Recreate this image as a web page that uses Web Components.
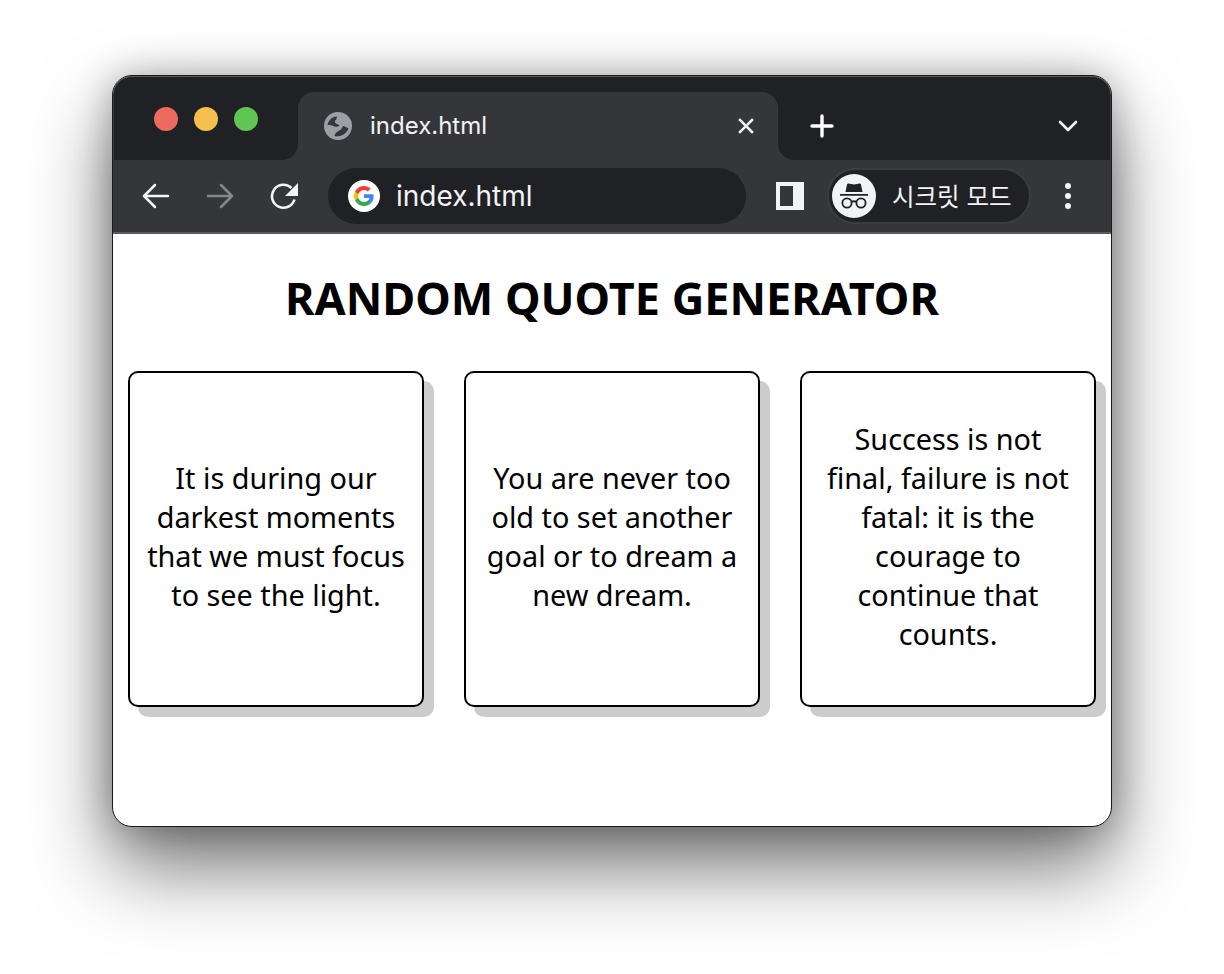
<!DOCTYPE html>
<html lang="ko">
<head>
<meta charset="utf-8">
<title>index.html</title>
<style>
  html, body { margin: 0; background: #fff; }
  body { font-family: "Noto Sans", "Noto Sans CJK KR", sans-serif; }
</style>
</head>
<body>
<browser-window>
  <tab-strip slot="strip" title-text="index.html"></tab-strip>
  <tool-bar slot="bar" address="index.html" mode-label="시크릿 모드"></tool-bar>
  <quote-page>
    <quote-card>It is during our darkest moments that we must focus to see the light.</quote-card>
    <quote-card>You are never too old to set another goal or to dream a new dream.</quote-card>
    <quote-card>Success is not final, failure is not fatal: it is the courage to continue that counts.</quote-card>
  </quote-page>
</browser-window>

<script>
class BrowserWindow extends HTMLElement {
    constructor() {
        super();
        this.attachShadow({ mode: 'open' });
        this.shadowRoot.innerHTML = `
            <style>
                :host { display: block; padding: 75px 112px 148px; overflow: hidden; }
                .win {
                    height: 752px;
                    border-radius: 20px;
                    background: #fff;
                    overflow: hidden;
                    display: flex;
                    flex-direction: column;
                    box-sizing: border-box;
                    border: 1px solid #1a1a1c;
                    box-shadow: 0 40px 80px rgba(0, 0, 0, .55), 0 0 36px rgba(0, 0, 0, .28);
                }
                .body { flex: 1; min-height: 0; }
            </style>
            <div class="win">
                <slot name="strip"></slot>
                <slot name="bar"></slot>
                <div class="body"><slot></slot></div>
            </div>
        `;
    }
}

class TabStrip extends HTMLElement {
    connectedCallback() {
        const title = this.getAttribute('title-text');
        this.attachShadow({ mode: 'open' });
        this.shadowRoot.innerHTML = `
            <style>
                :host { display: block; background: #35363a; border-radius: 19px 19px 0 0; }
                .strip {
                    height: 84px;
                    background: #202124;
                    border-radius: 19px 19px 0 0;
                    box-shadow: inset 0 1px 0 #56575b, inset 1px 0 0 #3a3b3f, inset -1px 0 0 #3a3b3f;
                    display: flex;
                    align-items: flex-end;
                    box-sizing: border-box;
                    padding-left: 41px;
                }
                .lights { display: flex; gap: 16px; width: 144px; height: 68px; padding-top: 15px; box-sizing: border-box; flex: none; }
                .lights i { width: 24px; height: 24px; border-radius: 50%; }
                .tab {
                    position: relative;
                    width: 480px;
                    height: 68px;
                    background: #35363a;
                    border-radius: 16px 16px 0 0;
                    display: flex;
                    align-items: center;
                    padding: 0 24px 0 26px;
                    box-sizing: border-box;
                    color: #f1f3f4;
                    font: 24px/1 "Inter", "Noto Sans", sans-serif;
                    flex: none;
                }
                .tab::before, .tab::after {
                    content: '';
                    position: absolute;
                    bottom: 0;
                    width: 16px;
                    height: 16px;
                    background: radial-gradient(circle at 0 0, #202124 15.5px, #35363a 16.5px);
                }
                .tab::before { left: -16px; }
                .tab::after { right: -16px; background: radial-gradient(circle at 100% 0, #202124 15.5px, #35363a 16.5px); }
                .name { flex: 1; margin-left: 18px; }
                .plus { margin-left: 32px; margin-bottom: 22px; display: block; }
                .more { margin-left: auto; margin-right: 33px; margin-bottom: 28px; display: block; }
            </style>
            <div class="strip">
                <div class="lights">
                    <i style="background:#ed6a5e"></i>
                    <i style="background:#f4bf4f"></i>
                    <i style="background:#61c554"></i>
                </div>
                <div class="tab">
                    <svg width="28" height="28" viewBox="0 0 28 28">
                        <circle cx="14" cy="14" r="14" fill="#9aa0a6"/>
                        <path d="M3.500 13C4.500 8 8 5 12.500 4.500 13.500 6 12 8 11 9 10 10.500 12 11.500 15 13 16 14.500 13 15 10.500 14.500 8 13 6 13 3.500 13z" fill="#35363a"/>
                        <path d="M10.500 24C11 21 13 19.500 16 18 18 17 18.500 15 19 14 20.500 14 23 15.500 24.500 16.500 23 20.500 19 24 14 24.300 12.500 24.500 11.500 24.300 10.500 24z" fill="#35363a"/>
                    </svg>
                    <span class="name">${title}</span>
                    <svg width="16" height="16" viewBox="0 0 16 16" fill="none" stroke="#f1f3f4" stroke-width="2.500" stroke-linecap="square"><path d="M2 2l12 12M14 2L2 14"/></svg>
                </div>
                <svg class="plus" width="24" height="24" viewBox="0 0 24 24" fill="none" stroke="#fff" stroke-width="3.400" stroke-linecap="round"><path d="M12 2v20M2 12h20"/></svg>
                <svg class="more" width="20" height="12" viewBox="0 0 20 12" fill="none" stroke="#f1f3f4" stroke-width="2.600" stroke-linecap="round" stroke-linejoin="round"><path d="M2 2l8 8 8-8"/></svg>
            </div>
        `;
    }
}

class ToolBar extends HTMLElement {
    connectedCallback() {
        const address = this.getAttribute('address');
        const label = this.getAttribute('mode-label');
        this.attachShadow({ mode: 'open' });
        this.shadowRoot.innerHTML = `
            <style>
                :host {
                    display: flex;
                    align-items: center;
                    height: 74px;
                    box-sizing: border-box;
                    background: #35363a;
                    border-bottom: 2px solid #5a5b5f;
                    padding-left: 29px;
                    flex: none;
                }
                svg { display: block; flex: none; }
                .nav { display: flex; align-items: center; gap: 36px; width: 186px; flex: none; }
                .omni {
                    width: 418px;
                    height: 56px;
                    border-radius: 28px;
                    background: #202124;
                    display: flex;
                    align-items: center;
                    padding-left: 20px;
                    box-sizing: border-box;
                    color: #f1f3f4;
                    font: 28px/1 "Inter", "Noto Sans", sans-serif;
                    flex: none;
                }
                .omni span { margin-left: 16px; }
                .panel { margin-left: 30px; }
                .mode {
                    margin-left: 23px;
                    width: 204px;
                    height: 56px;
                    border-radius: 28px;
                    background: #202124;
                    border: 2px solid #3c3d41;
                    box-sizing: border-box;
                    display: flex;
                    align-items: center;
                    padding-left: 3px;
                    color: #f1f3f4;
                    font: 24.5px/1 "Noto Sans CJK KR", sans-serif;
                    flex: none;
                }
                .mode span { margin-left: 16px; white-space: nowrap; }
                .dots { margin-left: 33px; }
            </style>
            <div class="nav">
                <svg width="28" height="26" viewBox="0 0 28 26" fill="none" stroke="#f1f3f4" stroke-width="2.500" stroke-linecap="round" stroke-linejoin="round"><path d="M26 13H2M13 2L2 13l11 11"/></svg>
                <svg width="28" height="26" viewBox="0 0 28 26" fill="none" stroke="#85878b" stroke-width="2.500" stroke-linecap="round" stroke-linejoin="round"><path d="M2 13h24M15 2l11 11-11 11"/></svg>
                <svg width="30" height="28" viewBox="0 0 30 28"><path d="M24.500 17.500A11.500 11.500 0 1 1 21.500 6" fill="none" stroke="#f1f3f4" stroke-width="2.600"/><path d="M28 1v13H15z" fill="#f1f3f4"/></svg>
            </div>
            <div class="omni">
                <svg width="32" height="32" viewBox="0 0 32 32">
                    <circle cx="16" cy="16" r="16" fill="#fff"/>
                    <path d="M25.600 16.200c0-.7-.1-1.400-.2-2H16v3.800h5.400c-.2 1.200-.9 2.300-2 3v2.500h3.200c1.900-1.700 3-4.300 3-7.300z" fill="#4285f4"/>
                    <path d="M16 26c2.700 0 5-.9 6.600-2.500l-3.200-2.500c-.9.600-2 1-3.400 1-2.600 0-4.800-1.800-5.600-4.100H7.100v2.600C8.800 23.800 12.100 26 16 26z" fill="#34a853"/>
                    <path d="M10.400 17.900c-.4-1.200-.4-2.600 0-3.800v-2.600H7.100c-1.400 2.700-1.400 6.300 0 9z" fill="#fbbc05"/>
                    <path d="M16 10c1.500 0 2.800.5 3.800 1.500l2.900-2.900C20.900 6.900 18.600 6 16 6c-3.900 0-7.200 2.200-8.900 5.500l3.300 2.600C11.200 11.800 13.400 10 16 10z" fill="#ea4335"/>
                </svg>
                <span>${address}</span>
            </div>
            <svg class="panel" width="28" height="28" viewBox="0 0 28 28"><path d="M0 0h28v28H0z M4 4v20h13V4z" fill="#f1f3f4" fill-rule="evenodd"/></svg>
            <div class="mode">
                <svg width="44" height="44" viewBox="0 0 44 44">
                    <circle cx="22" cy="22" r="22" fill="#f1f3f4"/>
                    <path d="M15 10.500c.2-.8.9-1.200 1.700-1l2.300.6c2 .5 4 .5 6 0l2.300-.6c.8-.2 1.500.2 1.700 1l1.500 7.500H13.500z" fill="#202124"/>
                    <path d="M8 20h28v1.800H8z" fill="#202124"/>
                    <g fill="none" stroke="#202124" stroke-width="1.800">
                        <circle cx="15" cy="29" r="4.600"/>
                        <circle cx="29" cy="29" r="4.600"/>
                        <path d="M19.500 28c1.500-.9 3.500-.9 5 0"/>
                    </g>
                </svg>
                <span>${label}</span>
            </div>
            <svg class="dots" width="8" height="28" viewBox="0 0 8 28" fill="#f1f3f4"><circle cx="4" cy="4" r="3"/><circle cx="4" cy="14" r="3"/><circle cx="4" cy="24" r="3"/></svg>
        `;
    }
}

class QuotePage extends HTMLElement {
    constructor() {
        super();
        this.attachShadow({ mode: 'open' });
        this.shadowRoot.innerHTML = `
            <style>
                :host { display: block; padding: 0 15px; color: #000; font-family: "Noto Sans", "Noto Sans CJK KR", sans-serif; }
                h1 {
                    margin: 0;
                    padding-top: 35px;
                    height: 102px;
                    box-sizing: content-box;
                    text-align: center;
                    font-size: 45px;
                    line-height: 58px;
                    font-weight: 700;
                }
                .grid { display: grid; grid-template-columns: repeat(3, 296px); gap: 40px; }
            </style>
            <h1>RANDOM QUOTE GENERATOR</h1>
            <div class="grid"><slot></slot></div>
        `;
    }
}

class QuoteCard extends HTMLElement {
    constructor() {
        super();
        this.attachShadow({ mode: 'open' });
        this.shadowRoot.innerHTML = `
            <style>
                :host {
                    display: flex;
                    align-items: center;
                    justify-content: center;
                    height: 336px;
                    box-sizing: border-box;
                    padding: 0 16.500px 6px;
                    background: #fff;
                    border: 2px solid #000;
                    border-radius: 10px;
                    box-shadow: 10px 10px 0 #ccc;
                    text-align: center;
                    font-size: 28.800px;
                    line-height: 39px;
                }
            </style>
            <div><slot></slot></div>
        `;
    }
}

customElements.define('browser-window', BrowserWindow);
customElements.define('tab-strip', TabStrip);
customElements.define('tool-bar', ToolBar);
customElements.define('quote-page', QuotePage);
customElements.define('quote-card', QuoteCard);
</script>
</body>
</html>
